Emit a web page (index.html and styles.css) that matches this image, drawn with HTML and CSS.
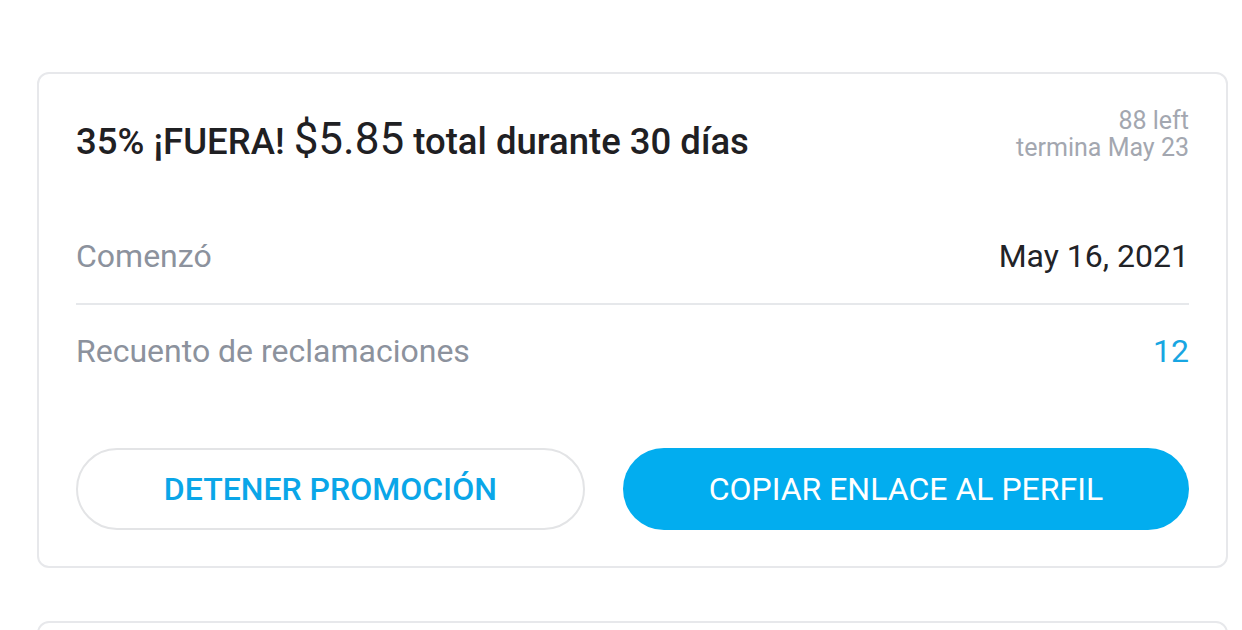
FILE: index.html
```html
<!DOCTYPE html>
<html lang="es">
<head>
<meta charset="utf-8">
<link rel="stylesheet" href="styles.css">
</head>
<body>
<div class="page">
  <section class="card">
    <div class="card-head">
      <h2 class="title">35% ¡FUERA! <span class="price">$5.85</span> total durante 30 días</h2>
      <div class="meta">
        <div>88 left</div>
        <div>termina May 23</div>
      </div>
    </div>
    <div class="rows">
      <div class="row">
        <span class="label">Comenzó</span>
        <span class="value">May 16, 2021</span>
      </div>
      <div class="row">
        <span class="label">Recuento de reclamaciones</span>
        <span class="value value-link">12</span>
      </div>
    </div>
    <div class="actions">
      <button class="btn btn-outline">DETENER PROMOCIÓN</button>
      <button class="btn btn-primary">COPIAR ENLACE AL PERFIL</button>
    </div>
  </section>
  <section class="card card-next"></section>
</div>
</body>
</html>
```

FILE: styles.css
```css
* { box-sizing: border-box; }
html, body { margin: 0; padding: 0; background: #ffffff; }
body {
  font-family: Roboto, "Noto Sans", "Liberation Sans", sans-serif;
  color: #222327;
  overflow: hidden;
  height: 630px;
}
.page {
  height: 630px;
  overflow: hidden;
  padding: 72px 14px 0 37px;
  display: flex;
  flex-direction: column;
  gap: 53px;
}
.card {
  flex: none;
  border: 2px solid #e7e8eb;
  border-radius: 12px;
  padding: 33px 37px 36px 37px;
  background: #fff;
}
.card-next { height: 60px; }
.card-head {
  display: flex;
  justify-content: space-between;
  align-items: flex-end;
}
.title {
  margin: 0;
  font-size: 36.5px;
  font-weight: 500;
  line-height: 38px;
  color: #1f2023;
}
.price {
  font-size: 44px;
  font-weight: 400;
}
.meta {
  text-align: right;
  color: #a3a7b0;
  font-size: 25px;
  line-height: 27px;
}
.rows {
  margin-top: 48px;
}
.row {
  display: flex;
  justify-content: space-between;
  align-items: center;
  height: 94px;
  font-size: 32px;
}
.row + .row { border-top: 2px solid #e6e8eb; }
.label { color: #8c929d; }
.value { color: #222327; }
.value-link { color: #18a6e2; }
.actions {
  margin-top: 51px;
  display: flex;
  gap: 38px;
}
.btn {
  flex: 1 1 auto;
  height: 82px;
  border-radius: 41px;
  font-family: Roboto, "Noto Sans", sans-serif;
  font-size: 32px;
  padding: 0;
  cursor: pointer;
}
.btn-outline {
  background: #fff;
  border: 2px solid #e3e4e6;
  color: #0aa6e8;
  font-weight: 500;
}
.btn-primary {
  background: #02adef;
  border: none;
  color: #fff;
  font-weight: 400;
}
```
